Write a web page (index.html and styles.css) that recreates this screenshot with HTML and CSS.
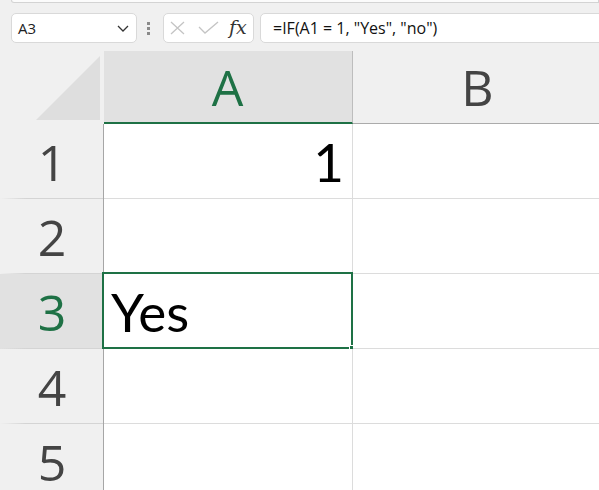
FILE: index.html
```html
<!DOCTYPE html>
<html>
<head>
<meta charset="utf-8">
<link rel="stylesheet" href="styles.css">
</head>
<body>
<div class="app">
  <div class="topbar">
    <div class="ribbon-edge"></div>
    <div class="formula-row">
      <div class="namebox">
        <span class="name">A3</span>
        <svg class="chev" width="12" height="7" viewBox="0 0 12 7"><path d="M1 1 L6 6 L11 1" fill="none" stroke="#333" stroke-width="1.3"/></svg>
      </div>
      <div class="dots"><i></i><i></i><i></i></div>
      <div class="fxbox">
        <svg class="ico-x" width="15" height="14" viewBox="0 0 15 14"><path d="M1 1 L14 13 M14 1 L1 13" fill="none" stroke="#c4c4c4" stroke-width="1.3"/></svg>
        <svg class="ico-ok" width="21" height="13" viewBox="0 0 21 13"><path d="M1 6 L7 12 L20 1" fill="none" stroke="#c4c4c4" stroke-width="1.3"/></svg>
        <span class="fx">fx</span>
      </div>
      <div class="formula">=IF(A1 = 1, "Yes", "no")</div>
    </div>
  </div>
  <div class="sheet">
    <div class="corner"><div class="tri"></div></div>
    <div class="colhead sel">A</div>
    <div class="colhead">B</div>

    <div class="rowhead">1</div>
    <div class="cell num">1</div>
    <div class="cell"></div>

    <div class="rowhead">2</div>
    <div class="cell"></div>
    <div class="cell"></div>

    <div class="rowhead sel">3</div>
    <div class="cell active">Yes<span class="handle"></span></div>
    <div class="cell"></div>

    <div class="rowhead">4</div>
    <div class="cell"></div>
    <div class="cell"></div>

    <div class="rowhead">5</div>
    <div class="cell"></div>
    <div class="cell"></div>
  </div>
</div>
</body>
</html>
```

FILE: styles.css
```css
html, body {
  margin: 0;
  padding: 0;
}
body {
  width: 599px;
  height: 490px;
  overflow: hidden;
  background: #f0f0f0;
  font-family: "Open Sans", "Noto Sans", sans-serif;
}
.app {
  width: 599px;
  height: 490px;
  overflow: hidden;
}
.topbar {
  height: 51px;
  display: flex;
  flex-direction: column;
}
.ribbon-edge {
  height: 2px;
  margin-left: 11px;
  background: #fbfbfb;
  border: 1px solid #d3d3d3;
  border-top: none;
  border-radius: 0 0 0 5px;
}
.formula-row {
  margin-top: 10px;
  height: 30px;
  display: flex;
  align-items: center;
  white-space: nowrap;
}
.formula-row > * {
  flex-shrink: 0;
}
.namebox {
  box-sizing: border-box;
  margin-left: 11px;
  width: 126px;
  height: 30px;
  background: #fff;
  border: 1px solid #d9d9d9;
  border-radius: 5px;
  display: flex;
  align-items: center;
  justify-content: space-between;
  padding: 0 7px 0 6px;
}
.name {
  font-size: 15px;
  color: #222;
}
.chev {
  display: block;
}
.dots {
  margin-left: 10px;
  width: 4px;
  display: flex;
  flex-direction: column;
  gap: 2px;
}
.dots i {
  display: block;
  width: 3px;
  height: 3px;
  background: #8a8a8a;
}
.fxbox {
  box-sizing: border-box;
  margin-left: 12px;
  width: 91px;
  height: 30px;
  background: #fff;
  border: 1px solid #d9d9d9;
  border-radius: 5px;
  display: flex;
  align-items: center;
  padding-left: 6px;
}
.ico-x { display: block; }
.ico-ok { display: block; margin-left: 13px; margin-top: -2px; }
.fx {
  margin-left: 10px;
  font-family: "DejaVu Serif", "Liberation Serif", serif;
  font-style: italic;
  font-size: 19px;
  color: #333;
  margin-top: -2px;
}
.formula {
  box-sizing: border-box;
  margin-left: 6px;
  width: 360px;
  height: 30px;
  background: #fff;
  border: 1px solid #d9d9d9;
  border-radius: 5px;
  font-size: 16px;
  color: #111;
  display: flex;
  align-items: center;
  padding-left: 12px;
}
.sheet {
  display: grid;
  grid-template-columns: 104px 249px 250px;
  grid-template-rows: 73px repeat(5, 75px);
}
.corner {
  position: relative;
  background: #f0f0f0;
}
.tri {
  position: absolute;
  left: 36px;
  top: 5px;
  width: 64px;
  height: 64px;
  background: #dedede;
  clip-path: polygon(100% 0, 100% 100%, 0 100%);
}
.colhead {
  box-sizing: border-box;
  display: flex;
  align-items: center;
  justify-content: center;
  font-size: 50px;
  color: #444;
  background: #f0f0f0;
  border-bottom: 1px solid #ababab;
  padding-bottom: 1px;
  border-right: 1px solid #c8c8c8;
}
.colhead.sel {
  margin-left: -1px;
  background: #e1e1e1;
  color: #1e7145;
  border-bottom: 2px solid #1e7145;
  border-right: 1px solid #bdbdbd;
  padding-bottom: 0;
}
.rowhead {
  box-sizing: border-box;
  position: relative;
  display: flex;
  align-items: center;
  justify-content: center;
  font-size: 50px;
  color: #444;
  background: #f0f0f0;
  border-right: 1px solid #a6a6a6;
  padding-left: 1px;
}
.rowhead::after {
  content: "";
  position: absolute;
  left: 0;
  right: 0;
  bottom: 0;
  height: 1px;
  background: linear-gradient(to right, rgba(210,210,210,0), #d4d4d4 25%, #d4d4d4);
}
.rowhead.sel {
  background: #e1e1e1;
  color: #1e7145;
}
.cell {
  box-sizing: border-box;
  position: relative;
  background: #fff;
  border-right: 1px solid #dcdcdc;
  border-bottom: 1px solid #dcdcdc;
  display: flex;
  align-items: center;
  font-family: Lato, "Open Sans", sans-serif;
  font-size: 53px;
  color: #000;
  padding: 0 8px 0 7px;
}
.cell.num {
  justify-content: flex-end;
}
.cell.active::before {
  content: "";
  position: absolute;
  left: -2px;
  top: -2px;
  right: -1px;
  bottom: -1px;
  border: 2px solid #1e7145;
  pointer-events: none;
}
.handle {
  position: absolute;
  right: -3px;
  bottom: -3px;
  width: 5px;
  height: 5px;
  background: #1e7145;
  border-left: 1px solid #fff;
  border-top: 1px solid #fff;
}
```
